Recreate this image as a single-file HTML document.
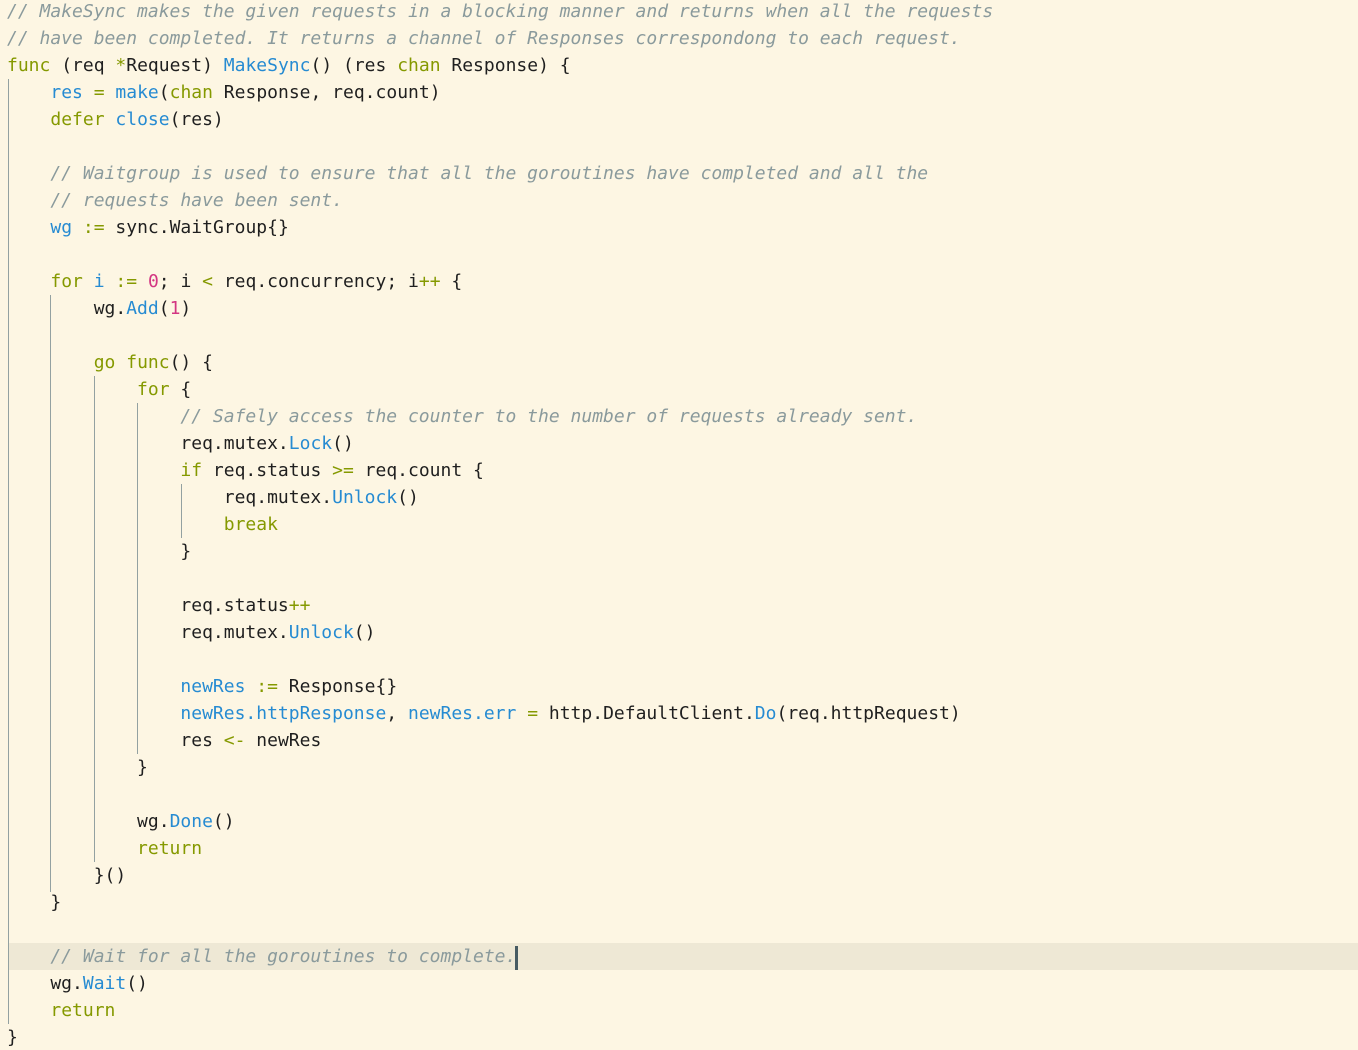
<!DOCTYPE html>
<html><head><meta charset="utf-8"><style>
html,body{margin:0;padding:0;background:#fdf6e3;width:1358px;height:1050px;overflow:hidden;position:relative}
#code{position:absolute;left:7px;top:-2px;font-family:"DejaVu Sans Mono","Liberation Mono",monospace;font-size:18px;color:#1f1f1f;white-space:pre}
.l{height:27px;line-height:27px}
.c{color:#8a9a9c;font-style:italic}
.k{color:#859900}
.b{color:#268bd2}
.n{color:#d33682}
.g{position:absolute;width:1px;background:#93a1a1}
.hl{position:absolute;left:8px;top:943px;width:1350px;height:27px;background:#eee8d5}
.cur{position:absolute;left:515px;top:946px;width:3px;height:24px;background:#475b62}
</style></head><body>
<div class="hl"></div>
<div class="g" style="left:8px;top:79px;height:945px"></div>
<div class="g" style="left:50px;top:295px;height:597px"></div>
<div class="g" style="left:94px;top:376px;height:486px"></div>
<div class="g" style="left:137px;top:403px;height:351px"></div>
<div class="g" style="left:181px;top:484px;height:54px"></div>
<div id="code"><div class="l c">// MakeSync makes the given requests in a blocking manner and returns when all the requests</div><div class="l c">// have been completed. It returns a channel of Responses correspondong to each request.</div><div class="l"><span class="k">func</span> (req <span class="k">*</span>Request) <span class="b">MakeSync</span>() (res <span class="k">chan</span> Response) {</div><div class="l">    <span class="b">res</span> <span class="k">=</span> <span class="b">make</span>(<span class="k">chan</span> Response, req.count)</div><div class="l">    <span class="k">defer</span> <span class="b">close</span>(res)</div><div class="l"> </div><div class="l c">    // Waitgroup is used to ensure that all the goroutines have completed and all the</div><div class="l c">    // requests have been sent.</div><div class="l">    <span class="b">wg</span> <span class="k">:=</span> sync.WaitGroup{}</div><div class="l"> </div><div class="l">    <span class="k">for</span> <span class="b">i</span> <span class="k">:=</span> <span class="n">0</span>; i <span class="k">&lt;</span> req.concurrency; i<span class="k">++</span> {</div><div class="l">        wg.<span class="b">Add</span>(<span class="n">1</span>)</div><div class="l"> </div><div class="l">        <span class="k">go</span> <span class="k">func</span>() {</div><div class="l">            <span class="k">for</span> {</div><div class="l c">                // Safely access the counter to the number of requests already sent.</div><div class="l">                req.mutex.<span class="b">Lock</span>()</div><div class="l">                <span class="k">if</span> req.status <span class="k">&gt;=</span> req.count {</div><div class="l">                    req.mutex.<span class="b">Unlock</span>()</div><div class="l">                    <span class="k">break</span></div><div class="l">                }</div><div class="l"> </div><div class="l">                req.status<span class="k">++</span></div><div class="l">                req.mutex.<span class="b">Unlock</span>()</div><div class="l"> </div><div class="l">                <span class="b">newRes</span> <span class="k">:=</span> Response{}</div><div class="l">                <span class="b">newRes.httpResponse</span>, <span class="b">newRes.err</span> <span class="k">=</span> http.DefaultClient.<span class="b">Do</span>(req.httpRequest)</div><div class="l">                res <span class="k">&lt;-</span> newRes</div><div class="l">            }</div><div class="l"> </div><div class="l">            wg.<span class="b">Done</span>()</div><div class="l">            <span class="k">return</span></div><div class="l">        }()</div><div class="l">    }</div><div class="l"> </div><div class="l c">    // Wait for all the goroutines to complete.</div><div class="l">    wg.<span class="b">Wait</span>()</div><div class="l">    <span class="k">return</span></div><div class="l">}</div></div>
<div class="cur"></div>
</body></html>
